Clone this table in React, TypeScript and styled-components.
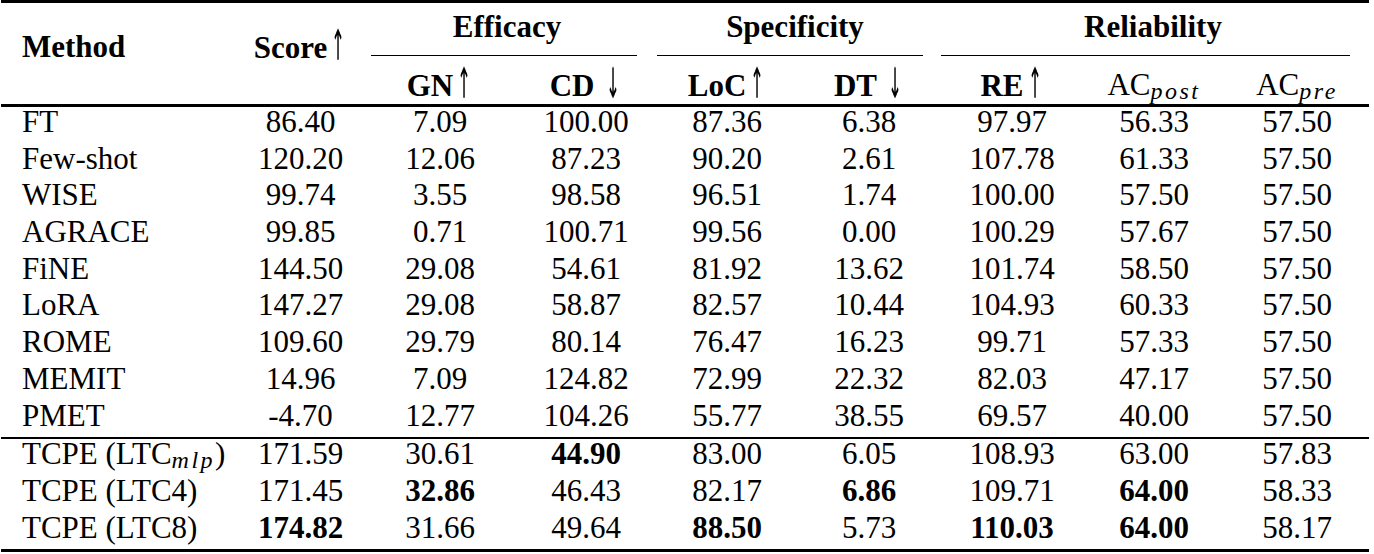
import React from "react";
import styled, { createGlobalStyle } from "styled-components";

const Global = createGlobalStyle`
  html, body { margin: 0; padding: 0; background: #fff; }
  body { font-family: "Liberation Serif", "Times New Roman", serif; }
`;

const Table = styled.div`
  display: grid;
  grid-template-columns: 239px 121px 158px 134px 148px 136px 150px 134px 148px;
  grid-template-rows: 3px 54px 47px 3px repeat(9, 36.7px) 2px repeat(3, 36.7px) 3px;
  width: 1368px;
  margin-left: 1px;
  font-family: "Liberation Serif", "Times New Roman", serif;
  font-size: 31px;
  color: #000;
`;

const Rule = styled.div`
  grid-column: 1 / -1;
  background: #000;
`;

const HeadCell = styled.div<{ $left?: boolean }>`
  grid-row: span 2;
  padding-top: 28.5px;
  padding-left: ${(p) => (p.$left ? "21px" : "0")};
  line-height: 30px;
  font-weight: bold;
  text-align: ${(p) => (p.$left ? "left" : "center")};
  white-space: nowrap;
`;

const GroupCell = styled.div<{ $span: number }>`
  grid-column: span ${(p) => p.$span};
  display: flex;
  flex-direction: column;
  justify-content: space-between;
  padding-top: 8.5px;
  line-height: 30px;
  font-weight: bold;
  text-align: center;
`;

const Cline = styled.div<{ $l: number; $r: number }>`
  height: 1px;
  background: #000;
  margin: 0 ${(p) => p.$r}px 1px ${(p) => p.$l}px;
`;

const SubHead = styled.div<{ $bold?: boolean; $shift?: number }>`
  padding-top: 12.5px;
  padding-left: ${(p) => p.$shift ?? 0}px;
  line-height: 30px;
  text-align: center;
  font-weight: ${(p) => (p.$bold ? "bold" : "normal")};
  white-space: nowrap;
`;

const Cell = styled.div<{ $bold?: boolean; $shift?: number }>`
  line-height: 30px;
  text-align: center;
  padding-left: ${(p) => p.$shift ?? 0}px;
  font-weight: ${(p) => (p.$bold ? "bold" : "normal")};
  white-space: nowrap;
`;

const MethodCell = styled.div`
  line-height: 30px;
  padding-left: 21px;
  text-align: left;
  white-space: nowrap;
`;

const MathSub = styled.sub`
  font-style: italic;
  font-size: 24px;
  line-height: 0;
  vertical-align: -4px;
  letter-spacing: 2.5px;
`;

const Arrow = styled.span`
  display: inline-block;
  font-family: "DejaVu Sans", sans-serif;
  font-weight: normal;
  font-size: 31px;
  line-height: 30px;
  color: #000;
  transform: translateY(-2px) scale(0.55, 1.35);
  transform-origin: 50% 50%;
  will-change: transform;
  margin: 0 -4px 0 -2px;
`;

type Row = {
  method: React.ReactNode;
  values: string[];
  bold?: number[];
};

const rowsA: Row[] = [
  { method: "FT", values: ["86.40", "7.09", "100.00", "87.36", "6.38", "97.97", "56.33", "57.50"] },
  { method: "Few-shot", values: ["120.20", "12.06", "87.23", "90.20", "2.61", "107.78", "61.33", "57.50"] },
  { method: "WISE", values: ["99.74", "3.55", "98.58", "96.51", "1.74", "100.00", "57.50", "57.50"] },
  { method: "AGRACE", values: ["99.85", "0.71", "100.71", "99.56", "0.00", "100.29", "57.67", "57.50"] },
  { method: "FiNE", values: ["144.50", "29.08", "54.61", "81.92", "13.62", "101.74", "58.50", "57.50"] },
  { method: "LoRA", values: ["147.27", "29.08", "58.87", "82.57", "10.44", "104.93", "60.33", "57.50"] },
  { method: "ROME", values: ["109.60", "29.79", "80.14", "76.47", "16.23", "99.71", "57.33", "57.50"] },
  { method: "MEMIT", values: ["14.96", "7.09", "124.82", "72.99", "22.32", "82.03", "47.17", "57.50"] },
  { method: "PMET", values: ["-4.70", "12.77", "104.26", "55.77", "38.55", "69.57", "40.00", "57.50"] },
];

const rowsB: Row[] = [
  {
    method: (
      <>
        TCPE (LTC<MathSub>mlp</MathSub>)
      </>
    ),
    values: ["171.59", "30.61", "44.90", "83.00", "6.05", "108.93", "63.00", "57.83"],
    bold: [2],
  },
  {
    method: "TCPE (LTC4)",
    values: ["171.45", "32.86", "46.43", "82.17", "6.86", "109.71", "64.00", "58.33"],
    bold: [1, 4, 6],
  },
  {
    method: "TCPE (LTC8)",
    values: ["174.82", "31.66", "49.64", "88.50", "5.73", "110.03", "64.00", "58.17"],
    bold: [0, 3, 5, 6],
  },
];

const renderRow = (r: Row, i: number) => (
  <React.Fragment key={i}>
    <MethodCell>{r.method}</MethodCell>
    {r.values.map((v, j) => (
      <Cell key={j} $bold={r.bold?.includes(j)} $shift={j === 7 ? 4 : 0}>
        {v}
      </Cell>
    ))}
  </React.Fragment>
);

export default function App() {
  return (
    <>
      <Global />
      <Table>
        <Rule />
        <HeadCell $left>Method</HeadCell>
        <HeadCell>
          Score<Arrow>↑</Arrow>
        </HeadCell>
        <GroupCell $span={2}>
          <span>Efficacy</span>
          <Cline $l={10} $r={16} />
        </GroupCell>
        <GroupCell $span={2}>
          <span>Specificity</span>
          <Cline $l={4} $r={14} />
        </GroupCell>
        <GroupCell $span={3}>
          <span>Reliability</span>
          <Cline $l={4} $r={19} />
        </GroupCell>
        <SubHead $bold>
          GN<Arrow>↑</Arrow>
        </SubHead>
        <SubHead $bold>
          CD <Arrow>↓</Arrow>
        </SubHead>
        <SubHead $bold>
          LoC<Arrow>↑</Arrow>
        </SubHead>
        <SubHead $bold>
          DT <Arrow>↓</Arrow>
        </SubHead>
        <SubHead $bold>
          RE<Arrow>↑</Arrow>
        </SubHead>
        <SubHead>
          AC<MathSub>post</MathSub>
        </SubHead>
        <SubHead $shift={4}>
          AC<MathSub>pre</MathSub>
        </SubHead>
        <Rule />
        {rowsA.map(renderRow)}
        <Rule />
        {rowsB.map(renderRow)}
        <Rule />
      </Table>
    </>
  );
}
